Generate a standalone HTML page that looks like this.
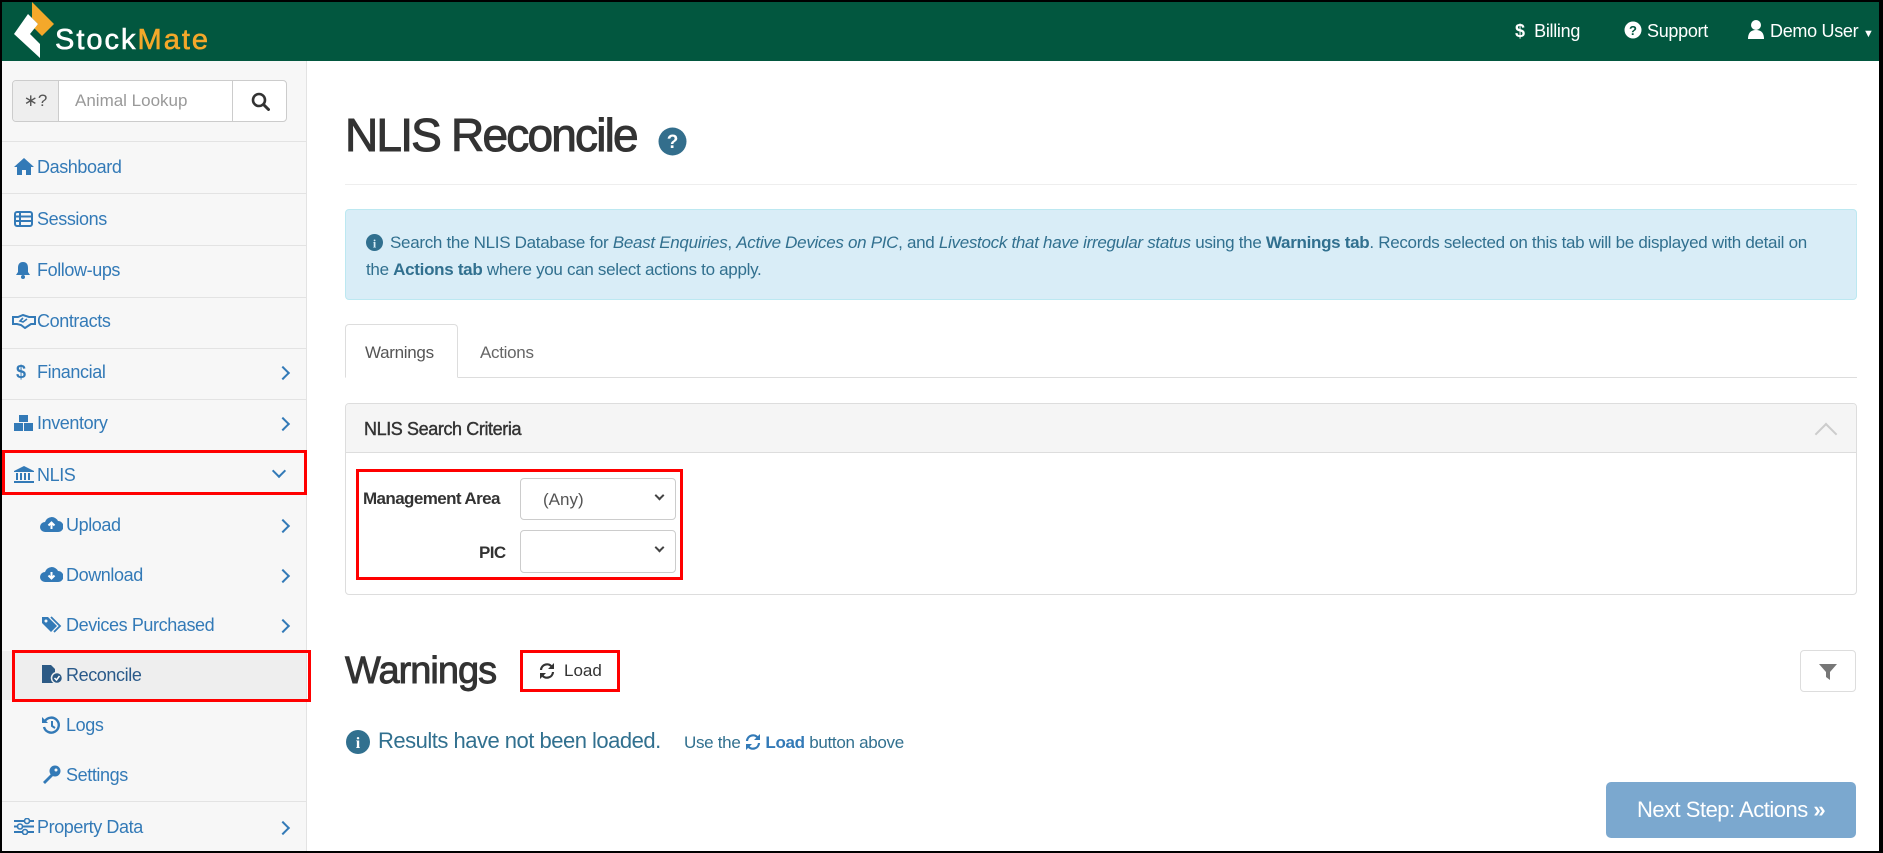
<!DOCTYPE html>
<html><head><meta charset="utf-8"><style>
*{box-sizing:border-box;margin:0;padding:0}
body{width:1883px;height:853px;overflow:hidden;background:#000;font-family:"Liberation Sans",sans-serif;position:relative}
#page{position:absolute;left:2px;top:2px;width:1877px;height:849px;background:#fff;overflow:hidden}
.a{position:absolute}
#hdr{left:0;top:0;width:1877px;height:59px;background:#02573f}
.hl{color:#fff;font-size:18px;top:19px;letter-spacing:-0.3px}
#side{left:0;top:59px;width:305px;height:790px;background:#f7f7f7;border-right:1px solid #e3e3e3}
.nav{position:absolute;left:0;width:304px;color:#337ab7;font-size:18px;letter-spacing:-0.4px}
.nav svg{position:absolute}
.sep{position:absolute;left:0;width:304px;height:1px;background:#e3e3e3}
.chev{position:absolute;left:276px;width:10px;height:10px;border-right:2.5px solid #337ab7;border-top:2.5px solid #337ab7;transform:rotate(45deg)}
.red{position:absolute;border:3px solid #f00}
</style></head><body><div id="page">
<div id="hdr" class="a">
 <svg class="a" style="left:10px;top:0" width="50" height="58" viewBox="0 0 50 58">
  <polygon points="20,0 42,22 30,34 22,26 26,22 20,16" fill="#f4a82a"/>
  <polygon points="16,12 26,22 18,32 28,42 28,56 2,32" fill="#fff"/>
 </svg>
 <div class="a" style="left:53px;top:22px;font-size:29px;color:#fff;letter-spacing:2px;-webkit-text-stroke:0.6px #fff">Stock<span style="color:#f4a82a;-webkit-text-stroke:0.6px #f4a82a">Mate</span></div>
 <div class="a hl" style="left:1513px"><b>$</b>&nbsp; Billing</div>
 <svg class="a" style="left:1622px;top:19px" width="18" height="18"><circle cx="9" cy="9" r="8.5" fill="#fff"/><text x="9" y="14" font-size="13" font-weight="bold" text-anchor="middle" fill="#02573f" font-family="Liberation Sans">?</text></svg>
 <div class="a hl" style="left:1645px">Support</div>
 <svg class="a" style="left:1746px;top:18px" width="16" height="19"><circle cx="8" cy="5" r="5" fill="#fff"/><path d="M0 19 Q0 10 8 10 Q16 10 16 19Z" fill="#fff"/></svg>
 <div class="a hl" style="left:1768px">Demo User <span style="font-size:11px">▼</span></div>
</div>

<div id="side" class="a">
 <div class="a" style="left:10px;top:19px;width:275px;height:42px;border:1px solid #ccc;border-radius:4px;background:#fff;overflow:hidden">
  <div class="a" style="left:0;top:0;width:46px;height:40px;background:#eee;border-right:1px solid #ccc;font-size:17px;color:#555;text-align:center;line-height:40px">∗?</div>
  <div class="a" style="left:62px;top:10px;font-size:17px;color:#999">Animal Lookup</div>
  <div class="a" style="left:219px;top:0;width:1px;height:40px;background:#ccc"></div>
  <svg class="a" style="left:238px;top:11px" width="19" height="19"><circle cx="8" cy="8" r="6" fill="none" stroke="#333" stroke-width="2.6"/><line x1="12.5" y1="12.5" x2="17.5" y2="17.5" stroke="#333" stroke-width="3" stroke-linecap="round"/></svg>
 </div>
 <div class="sep" style="top:80px"></div>
 <div class="nav" style="top:96px"><svg style="left:12px;top:1px" width="20" height="17"><path d="M10 0L20 9H17V17H12V12H8V17H3V9H0Z" fill="#337ab7"/></svg><span style="position:absolute;left:35px">Dashboard</span></div>
 <div class="sep" style="top:132px"></div>
 <div class="nav" style="top:148px"><svg style="left:12px;top:2px" width="19" height="16"><rect x="1" y="1" width="17" height="14" rx="2" fill="none" stroke="#337ab7" stroke-width="2"/><path d="M1 5.5H18M1 10H18M6 1V15" stroke="#337ab7" stroke-width="2"/></svg><span style="position:absolute;left:35px">Sessions</span></div>
 <div class="sep" style="top:184px"></div>
 <div class="nav" style="top:199px"><svg style="left:13px;top:1px" width="16" height="18"><path d="M8 1C4 1 3 4 3 7V11L1 14H15L13 11V7C13 4 12 1 8 1Z" fill="#337ab7"/><circle cx="8" cy="16" r="2" fill="#337ab7"/></svg><span style="position:absolute;left:35px">Follow-ups</span></div>
 <div class="sep" style="top:236px"></div>
 <div class="nav" style="top:250px"><svg style="left:10px;top:3px" width="24" height="15"><path d="M1 3H6L11 1L17 3H23V10H19L13 14L9 11L5 10H1Z" fill="none" stroke="#337ab7" stroke-width="2"/><path d="M11 4L8 7L11 8L15 5" fill="none" stroke="#337ab7" stroke-width="1.6"/></svg><span style="position:absolute;left:35px">Contracts</span></div>
 <div class="sep" style="top:287px"></div>
 <div class="nav" style="top:301px"><span style="position:absolute;left:14px;font-weight:bold">$</span><span style="position:absolute;left:35px">Financial</span></div><div class="chev" style="top:307px"></div>
 <div class="sep" style="top:338px"></div>
 <div class="nav" style="top:352px"><svg style="left:12px;top:2px" width="20" height="16"><rect x="5" y="0" width="9" height="7" fill="#337ab7"/><rect x="0" y="8" width="9" height="8" fill="#337ab7"/><rect x="10" y="8" width="9" height="8" fill="#337ab7"/></svg><span style="position:absolute;left:35px">Inventory</span></div><div class="chev" style="top:358px"></div>
 <div class="sep" style="top:389px"></div>
 <div class="nav" style="top:404px"><svg style="left:12px;top:1px" width="20" height="17"><path d="M10 0L20 5V6H0V5Z" fill="#337ab7"/><path d="M2 7h2v7h-2zM6 7h2v7h-2zM10 7h2v7h-2zM14 7h2v7h-2zM0 15h20v2h-20z" fill="#337ab7"/></svg><span style="position:absolute;left:35px">NLIS</span></div>
 <div class="a" style="left:272px;top:405px;width:10px;height:10px;border-right:2.5px solid #337ab7;border-bottom:2.5px solid #337ab7;transform:rotate(45deg)"></div>
 <div class="nav" style="top:454px"><svg style="left:38px;top:1px" width="23" height="16"><path d="M5 16A5 5 0 0 1 5 6A7 7 0 0 1 18 5A5.5 5.5 0 0 1 18 16Z" fill="#337ab7"/><path d="M11.5 13V7M8.5 9.5L11.5 6.5L14.5 9.5" stroke="#fff" stroke-width="2" fill="none"/></svg><span style="position:absolute;left:64px">Upload</span></div><div class="chev" style="top:460px"></div>
 <div class="nav" style="top:504px"><svg style="left:38px;top:1px" width="23" height="16"><path d="M5 16A5 5 0 0 1 5 6A7 7 0 0 1 18 5A5.5 5.5 0 0 1 18 16Z" fill="#337ab7"/><path d="M11.5 6V12M8.5 9.5L11.5 12.5L14.5 9.5" stroke="#fff" stroke-width="2" fill="none"/></svg><span style="position:absolute;left:64px">Download</span></div><div class="chev" style="top:510px"></div>
 <div class="nav" style="top:554px"><svg style="left:40px;top:1px" width="20" height="17"><path d="M0 1V7L9 16L15 10L6 1Z" fill="#337ab7"/><path d="M9 1L18 10L12 16" fill="none" stroke="#337ab7" stroke-width="1.8"/><circle cx="4" cy="5" r="1.5" fill="#f7f7f7"/></svg><span style="position:absolute;left:64px">Devices Purchased</span></div><div class="chev" style="top:560px"></div>
 <div class="a" style="left:0;top:590px;width:304px;height:49px;background:#eee"></div>
 <div class="nav" style="top:604px;color:#2a5a8a"><svg style="left:40px;top:0" width="21" height="19"><path d="M0 0H9L13 4V18H0Z" fill="#2c5a85"/><circle cx="15" cy="13" r="5.5" fill="#2c5a85" stroke="#eee" stroke-width="1.5"/><path d="M12.5 13L14.5 15L17.5 11" stroke="#fff" stroke-width="1.5" fill="none"/></svg><span style="position:absolute;left:64px">Reconcile</span></div>
 <div class="nav" style="top:654px"><svg style="left:40px;top:1px" width="19" height="18"><path d="M3 5A7.5 7.5 0 1 1 2 11" fill="none" stroke="#337ab7" stroke-width="2.4"/><path d="M0 1V7H6Z" fill="#337ab7"/><path d="M10 5V10L13 12" stroke="#337ab7" stroke-width="2" fill="none"/></svg><span style="position:absolute;left:64px">Logs</span></div>
 <div class="nav" style="top:704px"><svg style="left:40px;top:0" width="19" height="19"><circle cx="13" cy="6" r="5.5" fill="#337ab7"/><path d="M9 9L1 17L3 19L11 11Z" fill="#337ab7"/><circle cx="14" cy="5" r="1.5" fill="#f7f7f7"/></svg><span style="position:absolute;left:64px">Settings</span></div>
 <div class="sep" style="top:740px"></div>
 <div class="nav" style="top:756px"><svg style="left:12px;top:1px" width="20" height="17"><path d="M0 3H20M0 8.5H20M0 14H20" stroke="#337ab7" stroke-width="2"/><circle cx="13" cy="3" r="2.5" fill="#f7f7f7" stroke="#337ab7" stroke-width="1.6"/><circle cx="6" cy="8.5" r="2.5" fill="#f7f7f7" stroke="#337ab7" stroke-width="1.6"/><circle cx="11" cy="14" r="2.5" fill="#f7f7f7" stroke="#337ab7" stroke-width="1.6"/></svg><span style="position:absolute;left:35px">Property Data</span></div><div class="chev" style="top:762px"></div>
</div>
<div class="red" style="left:0;top:448px;width:305px;height:45px"></div>
<div class="red" style="left:10px;top:648px;width:299px;height:52px"></div>

<!-- main -->
<div class="a" style="left:343px;top:106px;font-size:46px;color:#333;letter-spacing:-1.8px;-webkit-text-stroke:1px #333">NLIS Reconcile</div>
<svg class="a" style="left:656px;top:125px" width="29" height="29"><circle cx="14.5" cy="14.5" r="14" fill="#336e8c"/><text x="14.5" y="21" font-size="19" font-weight="bold" text-anchor="middle" fill="#fff" font-family="Liberation Sans">?</text></svg>
<div class="a" style="left:343px;top:182px;width:1512px;height:1px;background:#eee"></div>

<div class="a" style="left:343px;top:207px;width:1512px;height:91px;background:#d9edf7;border:1px solid #bce8f1;border-radius:4px"></div>
<svg class="a" style="left:364px;top:232px" width="17" height="17"><circle cx="8.5" cy="8.5" r="8.5" fill="#31708f"/><text x="8.5" y="13.5" font-size="12" font-weight="bold" text-anchor="middle" fill="#d9edf7" font-family="Liberation Serif">i</text></svg>
<div class="a" style="left:388px;top:231px;font-size:17px;color:#31708f;letter-spacing:-0.3px;white-space:nowrap">Search the NLIS Database for <i>Beast Enquiries</i>, <i>Active Devices on PIC</i>, and <i>Livestock that have irregular status</i> using the <b>Warnings tab</b>. Records selected on this tab will be displayed with detail on</div>
<div class="a" style="left:364px;top:258px;font-size:17px;color:#31708f;letter-spacing:-0.3px">the <b>Actions tab</b> where you can select actions to apply.</div>

<div class="a" style="left:343px;top:375px;width:1512px;height:1px;background:#ddd"></div>
<div class="a" style="left:343px;top:322px;width:113px;height:54px;border:1px solid #ddd;border-bottom:1px solid #fff;border-radius:4px 4px 0 0;background:#fff"></div>
<div class="a" style="left:363px;top:341px;font-size:17px;color:#555;letter-spacing:-0.3px">Warnings</div>
<div class="a" style="left:478px;top:341px;font-size:17px;color:#666;letter-spacing:-0.3px">Actions</div>

<div class="a" style="left:343px;top:401px;width:1512px;height:192px;border:1px solid #ddd;border-radius:4px;overflow:hidden">
 <div class="a" style="left:0;top:0;width:1512px;height:49px;background:#f5f5f5;border-bottom:1px solid #ddd"></div>
 <div class="a" style="left:18px;top:15px;font-size:18px;color:#333;letter-spacing:-0.4px;-webkit-text-stroke:0.4px #333">NLIS Search Criteria</div>
 <div class="a" style="left:1472px;top:22px;width:16px;height:16px;border-left:2px solid #ccc;border-top:2px solid #ccc;transform:rotate(45deg)"></div>
 <div class="a" style="left:17px;top:85px;font-size:17px;font-weight:bold;color:#333;letter-spacing:-0.6px">Management Area</div>
 <div class="a" style="left:133px;top:139px;font-size:17px;font-weight:bold;color:#333;letter-spacing:-0.6px">PIC</div>
 <div class="a" style="left:174px;top:74px;width:156px;height:42px;border:1px solid #ccc;border-radius:4px"><span class="a" style="left:22px;top:11px;font-size:17px;color:#555">(Any)</span><span class="a" style="left:135px;top:13px;width:7px;height:7px;border-right:2px solid #444;border-bottom:2px solid #444;transform:rotate(45deg)"></span></div>
 <div class="a" style="left:174px;top:126px;width:156px;height:43px;border:1px solid #ccc;border-radius:4px"><span class="a" style="left:135px;top:13px;width:7px;height:7px;border-right:2px solid #444;border-bottom:2px solid #444;transform:rotate(45deg)"></span></div>
</div>
<div class="red" style="left:354px;top:467px;width:327px;height:111px"></div>

<div class="a" style="left:343px;top:648px;font-size:38px;color:#333;letter-spacing:-1px;-webkit-text-stroke:0.9px #333">Warnings</div>
<div class="red" style="left:518px;top:648px;width:100px;height:42px"></div>
<svg class="a" style="left:537px;top:661px" width="16" height="16"><path d="M2 7A6 6 0 0 1 13 4M14 9A6 6 0 0 1 3 12" fill="none" stroke="#333" stroke-width="2.2"/><path d="M15 0V6H9Z M1 16V10H7Z" fill="#333"/></svg>
<div class="a" style="left:562px;top:659px;font-size:17px;color:#333">Load</div>
<div class="a" style="left:1798px;top:648px;width:56px;height:42px;border:1px solid #ddd;border-radius:4px"></div>
<svg class="a" style="left:1817px;top:662px" width="18" height="16"><path d="M0 0H18L11 8V16L7 13V8Z" fill="#777"/></svg>

<svg class="a" style="left:344px;top:728px" width="24" height="24"><circle cx="12" cy="12" r="12" fill="#31708f"/><text x="12" y="18" font-size="16" font-weight="bold" text-anchor="middle" fill="#fff" font-family="Liberation Serif">i</text></svg>
<div class="a" style="left:376px;top:726px;font-size:22px;color:#31708f;letter-spacing:-0.5px">Results have not been loaded.</div>
<div class="a" style="left:682px;top:731px;font-size:17px;color:#31708f;letter-spacing:-0.3px">Use the <svg width="16" height="16" style="vertical-align:-2px"><path d="M2 7A6 6 0 0 1 13 4M14 9A6 6 0 0 1 3 12" fill="none" stroke="#337ab7" stroke-width="2.2"/><path d="M15 0V6H9Z M1 16V10H7Z" fill="#337ab7"/></svg> <b style="color:#337ab7">Load</b> button above</div>

<div class="a" style="left:1604px;top:780px;width:250px;height:56px;background:#7ba8cf;border-radius:5px;color:#fff;font-size:22px;text-align:center;line-height:56px;letter-spacing:-0.5px">Next Step: Actions <b>»</b></div>
</div></body></html>
